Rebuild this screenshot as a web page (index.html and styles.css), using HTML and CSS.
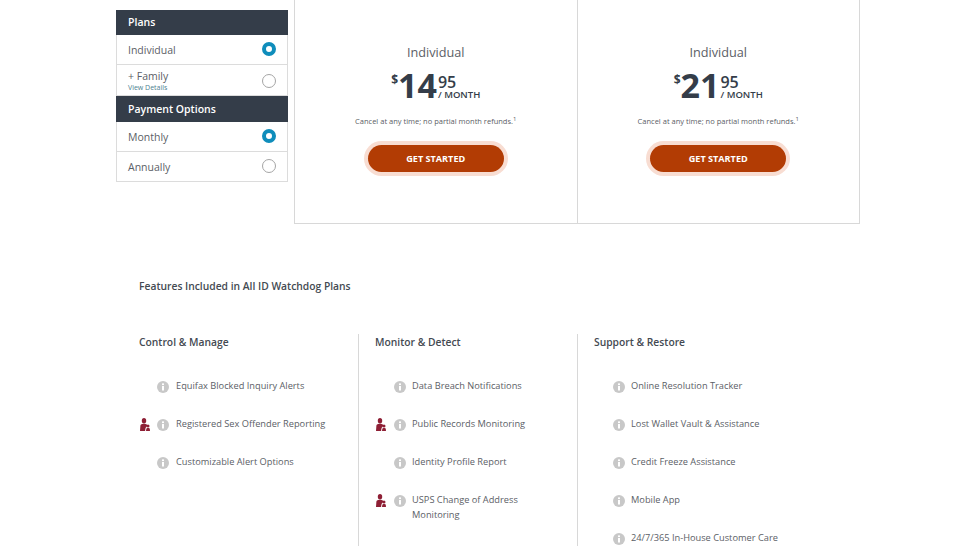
FILE: index.html
```html
<!doctype html>
<html>
<head>
  <meta charset="utf-8">
  <title>ID Watchdog Plans</title>
  <link rel="stylesheet" href="styles.css">
</head>
<body>
  <svg class="defs" width="0" height="0">
    <symbol id="info" viewBox="0 0 12 12">
      <circle cx="6" cy="6" r="6" fill="#c8c8c8"/>
      <rect x="5" y="5" width="2" height="4.5" fill="#fff"/>
      <rect x="5" y="2.4" width="2" height="1.7" fill="#fff"/>
    </symbol>
    <symbol id="people" viewBox="0 0 10 13">
      <ellipse cx="4" cy="2.8" rx="2.2" ry="2.8" fill="#8e1f35"/>
      <path d="M0 13 L0.4 7.6 Q0.6 5.9 2.2 5.9 L5.6 5.9 Q7.2 5.9 7.3 7.4 L6.8 8.4 Q5.6 9.2 5.4 10.8 L5.1 13 Z" fill="#8e1f35"/>
      <circle cx="8" cy="8.1" r="1.5" fill="#8e1f35"/>
      <path d="M6 13 L6.3 11 Q6.5 10 7.4 10 L8.7 10 Q9.6 10 9.8 11 L10 13 Z" fill="#8e1f35"/>
    </symbol>
  </svg>

  <div class="top">
    <div class="sidebar">
      <div class="side-head">Plans</div>
      <div class="option">
        <span>Individual</span>
        <span class="radio on"></span>
      </div>
      <div class="option family">
        <span>+ Family<a class="details">View Details</a></span>
        <span class="radio"></span>
      </div>
      <div class="side-head">Payment Options</div>
      <div class="option">
        <span>Monthly</span>
        <span class="radio on"></span>
      </div>
      <div class="option">
        <span>Annually</span>
        <span class="radio"></span>
      </div>
    </div>

    <div class="plans">
      <div class="plan">
        <div class="plan-name">Individual</div>
        <div class="price">
          <span class="dollar">$</span><span class="whole">14</span>
          <span class="cents">95<small>/ MONTH</small></span>
        </div>
        <p class="terms">Cancel at any time; no partial month refunds.<sup>1</sup></p>
        <button class="start">GET STARTED</button>
      </div>
      <div class="plan">
        <div class="plan-name">Individual</div>
        <div class="price">
          <span class="dollar">$</span><span class="whole">21</span>
          <span class="cents">95<small>/ MONTH</small></span>
        </div>
        <p class="terms">Cancel at any time; no partial month refunds.<sup>1</sup></p>
        <button class="start">GET STARTED</button>
      </div>
    </div>
  </div>

  <h2 class="features-title">Features Included in All ID Watchdog Plans</h2>

  <div class="features">
    <div class="col">
      <h3>Control &amp; Manage</h3>
      <ul>
        <li><svg class="info"><use href="#info"/></svg>Equifax Blocked Inquiry Alerts</li>
        <li><svg class="people"><use href="#people"/></svg><svg class="info"><use href="#info"/></svg>Registered Sex Offender Reporting</li>
        <li><svg class="info"><use href="#info"/></svg>Customizable Alert Options</li>
      </ul>
    </div>
    <div class="col">
      <h3>Monitor &amp; Detect</h3>
      <ul>
        <li><svg class="info"><use href="#info"/></svg>Data Breach Notifications</li>
        <li><svg class="people"><use href="#people"/></svg><svg class="info"><use href="#info"/></svg>Public Records Monitoring</li>
        <li><svg class="info"><use href="#info"/></svg>Identity Profile Report</li>
        <li><svg class="people"><use href="#people"/></svg><svg class="info"><use href="#info"/></svg>USPS Change of Address Monitoring</li>
      </ul>
    </div>
    <div class="col">
      <h3>Support &amp; Restore</h3>
      <ul>
        <li><svg class="info"><use href="#info"/></svg>Online Resolution Tracker</li>
        <li><svg class="info"><use href="#info"/></svg>Lost Wallet Vault &amp; Assistance</li>
        <li><svg class="info"><use href="#info"/></svg>Credit Freeze Assistance</li>
        <li><svg class="info"><use href="#info"/></svg>Mobile App</li>
        <li><svg class="info"><use href="#info"/></svg>24/7/365 In-House Customer Care</li>
      </ul>
    </div>
  </div>
</body>
</html>
```

FILE: styles.css
```css
html, body {
  height: 546px;
  overflow: hidden;
}

body {
  margin: 0;
  background: #fff;
  color: #5b6066;
  font-family: "Open Sans", sans-serif;
}

.defs {
  display: block;
  height: 0;
}

.top {
  display: flex;
  align-items: flex-start;
  gap: 6px;
  padding-left: 116px;
}

/* Sidebar */
.sidebar {
  width: 172px;
  margin-top: 10px;
}

.side-head {
  height: 26px;
  padding-left: 12px;
  background: #343d49;
  color: #fff;
  font-size: 10.5px;
  font-weight: 600;
  line-height: 26px;
}

.side-head:first-child {
  height: 25px;
  line-height: 25px;
}

.option {
  display: flex;
  justify-content: space-between;
  align-items: center;
  height: 30px;
  padding: 0 11px;
  border: 1px solid #dcdcdc;
  border-top: none;
  box-sizing: border-box;
  font-size: 10.5px;
}

.family {
  height: 31px;
  line-height: 13px;
  padding-top: 2px;
}

.details {
  display: block;
  color: #4d7f8f;
  font-size: 7px;
  line-height: 9px;
}

.radio {
  box-sizing: border-box;
  width: 14px;
  height: 14px;
  margin-top: -1px;
  border: 1.5px solid #a5a5a5;
  border-radius: 50%;
  background: #fff;
}

.radio.on {
  border: 4.5px solid #0f8dbb;
}

/* Plans */
.plans {
  display: flex;
  width: 566px;
  height: 224px;
  border: 1px solid #d8d8d8;
  border-top: none;
  box-sizing: border-box;
}

.plan {
  flex: 1;
  display: flex;
  flex-direction: column;
  align-items: center;
  padding-top: 43px;
}

.plan + .plan {
  border-left: 1px solid #d8d8d8;
}

.plan-name {
  font-size: 12.7px;
  line-height: 18px;
}

.price {
  display: flex;
  align-items: flex-start;
  height: 38px;
  margin-top: 5px;
  color: #343d49;
  font-weight: 700;
}

.dollar {
  margin-top: 7px;
  font-size: 12px;
  line-height: 14px;
  font-weight: 700;
}

.whole {
  font-size: 34px;
  line-height: 38px;
  margin-right: 1px;
}

.cents {
  margin-top: 8px;
  font-size: 16px;
  font-weight: 600;
  line-height: 16px;
}

.cents small {
  display: block;
  font-size: 9.5px;
  font-weight: 600;
  line-height: 10px;
  white-space: nowrap;
}

.terms {
  margin: 11px 0 0;
  font-size: 7.5px;
  line-height: 12px;
}

.terms sup {
  font-size: 6px;
  line-height: 0;
}

.start {
  width: 136px;
  height: 27px;
  margin-top: 18px;
  border: none;
  border-radius: 14px;
  background: #b23c04;
  box-shadow: 0 0 0 4px #f8ddd2;
  color: #fff;
  font-family: inherit;
  font-size: 9.1px;
  font-weight: 700;
}

/* Features */
.features-title {
  margin: 55px 0 0 139px;
  color: #444a52;
  font-size: 10.3px;
  font-weight: 600;
  line-height: 14px;
}

.features {
  display: grid;
  grid-template-columns: 219px 219px 240px;
  margin: 41px 0 0 139px;
}

.col {
  height: 212px;
  padding-left: 16px;
  overflow: hidden;
}

.col:first-child {
  padding-left: 0;
}

.col + .col {
  border-left: 1px solid #d8d8d8;
}

.col h3 {
  margin: 1px 0 0;
  color: #444a52;
  font-size: 10.3px;
  font-weight: 600;
  line-height: 14px;
}

.col ul {
  margin: 29px 0 0;
  padding: 0;
  list-style: none;
}

.col li {
  position: relative;
  height: 38px;
  width: 160px;
  padding-left: 37px;
  font-size: 9.25px;
  line-height: 15px;
}

.col:first-child li {
  width: 170px;
}

.col:nth-child(2) li {
  width: 125px;
}

.info, .people {
  position: absolute;
  top: 3px;
  width: 12px;
  height: 12px;
}

.info {
  left: 19px;
}

.col:first-child .info {
  left: 18px;
}

.people {
  left: 1px;
  top: 2px;
  width: 10px;
  height: 13px;
}
```
